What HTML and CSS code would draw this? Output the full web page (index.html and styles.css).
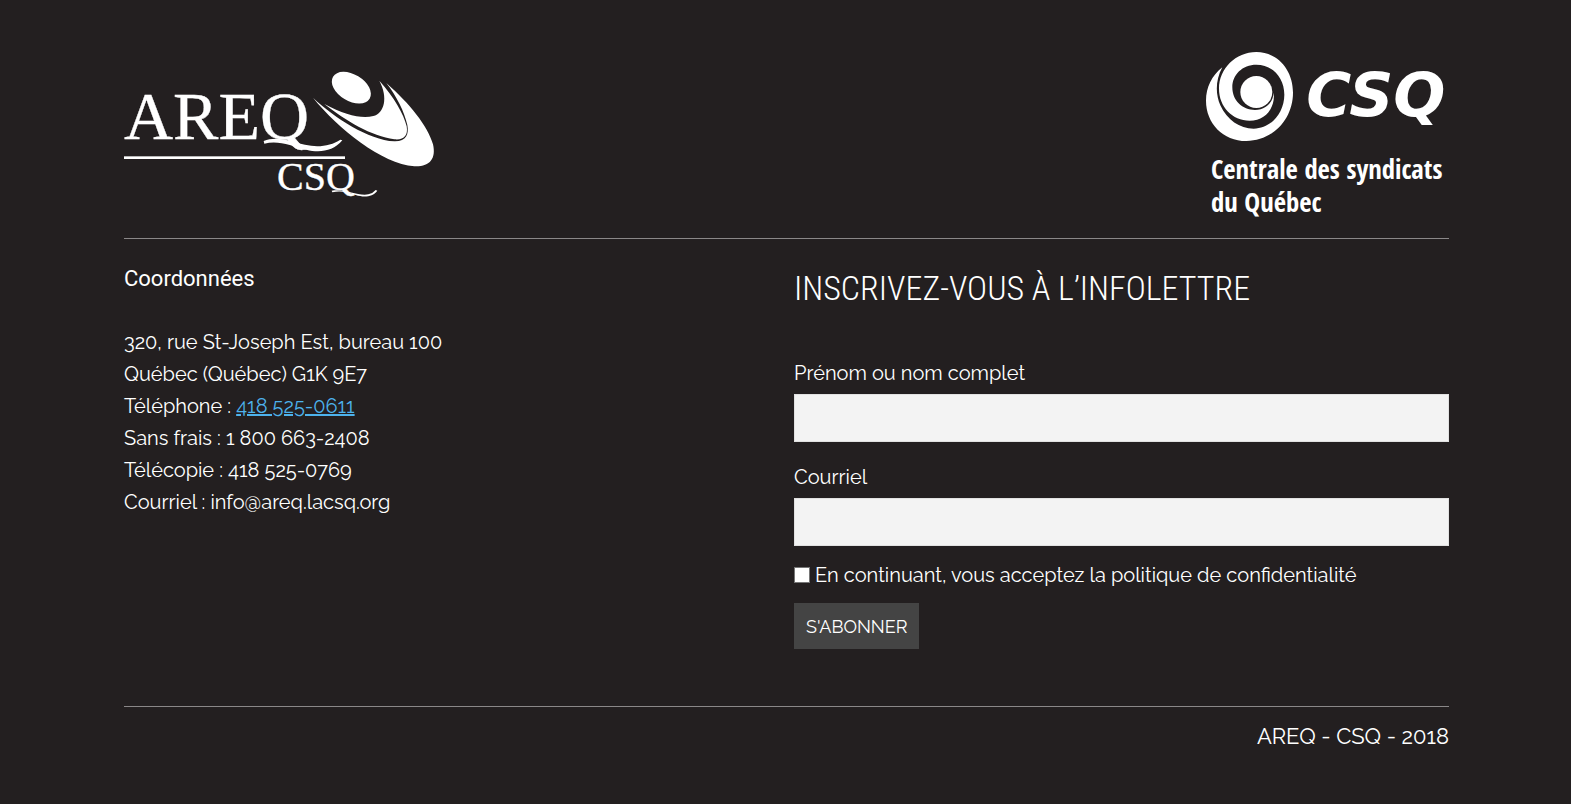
FILE: index.html
```html
<!DOCTYPE html>
<html lang="fr">
<head>
    <meta charset="UTF-8">
    <meta name="viewport" content="width=device-width, initial-scale=1.0">
    <title>AREQ - CSQ</title>
    <link rel="stylesheet" href="styles.css">
</head>
<body>

<footer class="footer">
    <div class="logos">
        <svg class="logo-areq" viewBox="27 35 933 375" role="img" aria-label="AREQ CSQ">
            <text class="areq-text" x="27" y="236" font-size="204">AREQ</text>
            <!-- Q tail -->
            <path d="M446 242C470 232 500 234 530 243C590 264 640 262 676 238L682 240C654 274 612 278 574 268C530 257 490 238 448 250Z"/>
            <rect x="27" y="288" width="663" height="8"/>
            <text class="areq-text" x="486" y="388" font-size="120">CSQ</text>
            <path d="M650 391C690 384 728 408 760 402Q774 399 782 389L787 391C772 410 748 412 722 404C696 396 678 390 652 396Z"/>
            <!-- figure -->
            <ellipse cx="709" cy="82" rx="64" ry="40" transform="rotate(31 709 82)"/>
            <path d="M628 131C690 164 740 176 775 167C808 158 820 112 793 61C838 112 866 160 875 198C880 226 866 240 838 237C770 228 690 180 628 131Z"/>
            <path d="M594 112C660 174 760 238 838 243C874 244 882 222 877 194C868 154 845 108 814 68C884 130 938 196 954 252C964 296 944 320 898 318C800 310 670 206 594 112Z"/>
        </svg>

        <svg class="logo-csq" viewBox="33 36 729 495" role="img" aria-label="CSQ Centrale des syndicats du Québec">
            <!-- spiral -->
            <path fill-rule="evenodd" d="M184 36C246 36 294 88 294 158C294 238 232 303 154 303C84 303 33 250 33 182C33 142 50 108 82 82C60 122 62 164 76 196C96 240 134 266 176 266C228 266 268 218 268 164C268 112 232 74 184 74C142 74 112 104 112 142C112 182 142 210 180 210C212 210 234 188 236 158C242 204 210 242 164 242C112 242 72 200 72 146C72 86 122 36 184 36Z"/>
            <circle cx="184" cy="156" r="48"/>
            <text class="csq-text" x="334" y="228" font-size="184">CSQ</text>
            <text class="csq-name" x="48" y="418" font-size="80">Centrale des syndicats</text>
            <text class="csq-name" x="48" y="516" font-size="80">du Québec</text>
        </svg>
    </div>

    <div class="columns">
        <div class="contact">
            <h2>Coordonnées</h2>
            <p>
                320, rue St-Joseph Est, bureau 100<br>
                Québec (Québec) G1K 9E7<br>
                Téléphone : <a href="tel:4185250611">418 525-0611</a><br>
                Sans frais : 1 800 663-2408<br>
                Télécopie : 418 525-0769<br>
                Courriel : info@areq.lacsq.org
            </p>
        </div>

        <form class="newsletter">
            <h3>Inscrivez-vous à l’infolettre</h3>
            <label for="name">Prénom ou nom complet</label>
            <input class="field" type="text" id="name" name="name">
            <label for="email">Courriel</label>
            <input class="field" type="email" id="email" name="email">
            <div class="privacy">
                <input type="checkbox" id="privacy" name="privacy">
                <label for="privacy">En continuant, vous acceptez la politique de confidentialité</label>
            </div>
            <button type="submit">S'ABONNER</button>
        </form>
    </div>

    <p class="copyright">AREQ - CSQ - 2018</p>
</footer>

</body>
</html>
```
FILE: styles.css
```css
* {
    box-sizing: border-box;
}
body {
    margin: 0;
    background-color: #231f20;
    color: #fff;
    font-family: Raleway, Lato, sans-serif;
    font-size: 20px;
    line-height: 32px;
}
.footer {
    padding: 52px 122px 40px 124px;
}
.logos {
    display: flex;
    justify-content: space-between;
    align-items: center;
    padding-bottom: 21px;
    border-bottom: 1px solid #8a8788;
}
.logos svg {
    display: block;
    fill: #fff;
    overflow: visible;
}
.logo-areq {
    width: 311px;
}
.logo-csq {
    width: 243px;
}
.areq-text {
    font-family: "Liberation Serif", serif;
    stroke: #fff;
    stroke-width: 1px;
}
.csq-text {
    font-family: "DejaVu Sans", sans-serif;
    font-weight: 700;
    font-style: italic;
}
.csq-name {
    font-family: "Open Sans Condensed", "Roboto Condensed", "Liberation Sans Narrow", sans-serif;
    font-weight: 700;
}
.columns {
    display: grid;
    grid-template-columns: 1fr 1fr;
    gap: 15px;
    padding: 24px 0 57px;
    border-bottom: 1px solid #8a8788;
}
h2 {
    margin: 0 0 31px;
    font-family: Roboto, sans-serif;
    font-size: 22px;
    font-weight: 400;
    line-height: 32px;
}
.contact p {
    margin: 0;
}
.contact a {
    color: #4db2ec;
}
h3 {
    margin: 0 0 44px;
    font-family: "Roboto Condensed", "Liberation Sans Narrow", sans-serif;
    font-size: 34px;
    font-weight: 300;
    line-height: 50px;
    text-transform: uppercase;
}
.newsletter label {
    display: block;
}
.field {
    display: block;
    width: 100%;
    height: 48px;
    margin: 5px 0 19px;
    padding: 0 12px;
    border: 1px solid #e1e1e1;
    background-color: #f3f3f3;
    font: inherit;
}
.privacy {
    display: flex;
    align-items: center;
    gap: 5px;
    margin: -6px 0 12px;
}
.privacy input {
    appearance: none;
    width: 16px;
    height: 16px;
    margin: 0;
    border: 1px solid #767676;
    background-color: #fff;
}
.privacy input:checked {
    background-color: #4db2ec;
}
button {
    display: block;
    height: 46px;
    padding: 0 12px;
    border: 0;
    background-color: #444;
    color: #fff;
    font-family: inherit;
    font-size: 18px;
    cursor: pointer;
}
.copyright {
    margin: 13px 0 0;
    font-size: 22px;
    text-align: right;
}
```
